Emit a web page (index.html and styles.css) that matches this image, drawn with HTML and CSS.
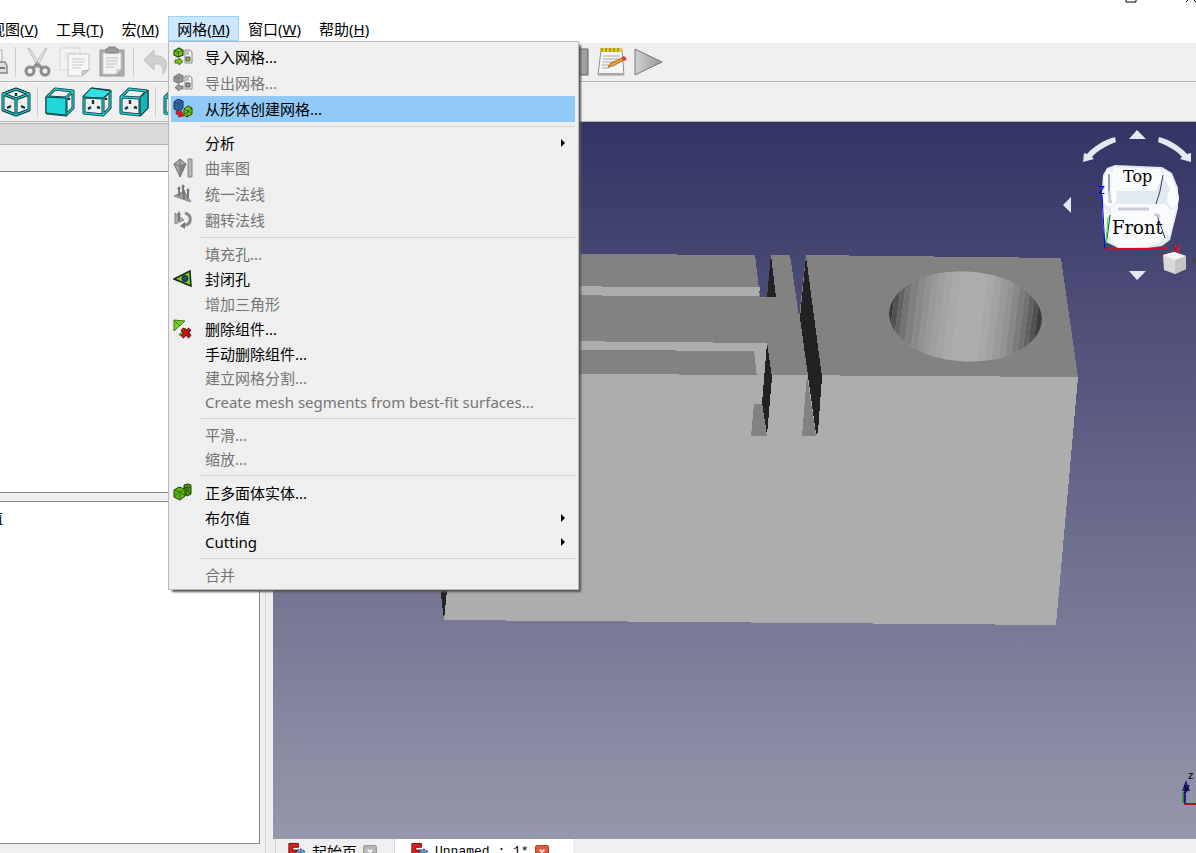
FILE: index.html
```html
<!DOCTYPE html>
<html lang="zh">

<head>
    <meta charset="UTF-8" />
    <meta name="viewport" content="width=device-width, initial-scale=1" />
    <title>FreeCAD</title>
    <link rel="stylesheet" href="styles.css">
</head>

<body>
    <!-- 公用图形 -->
    <svg class="defs" aria-hidden="true">
        <symbol id="openFrame" viewBox="-2 -2 32 32">
            <g fill="none" stroke-linejoin="round">
                <path stroke="#06383a" stroke-width="3" d="M1 9L20 10V27L1 25ZM20 10L27 3V20L20 27M27 3L9 1L1 9" />
                <path stroke="#22cfd2" stroke-width="1.3" d="M1 9L20 10V27L1 25ZM20 10L27 3V20L20 27M27 3L9 1L1 9" />
                <path stroke="#06383a" stroke-width="2.4" d="M10 12V16M5 21L8 19M14 19L17 20M23 10V12" />
            </g>
        </symbol>
        <symbol id="meshDoc" viewBox="0 0 20 20">
            <path d="M1 4L6 1L10 3V8L5 10L1 8Z" fill="var(--ic)" stroke="var(--ic-dark)" stroke-width="1.2" />
            <path d="M1 4L6 5L10 3M6 5L5 10M3 7L6 5" fill="none" stroke="var(--ic-dark)" stroke-width="0.7" />
            <path d="M12 3H17L19 5V16H12Z" fill="#f4f4f4" stroke="#888" />
            <path d="M13 5H16M13 7H16" stroke="#888" />
            <path d="M13 10H17V14H13Z" fill="var(--ic)" stroke="#555" />
        </symbol>
        <symbol id="cad" viewBox="0 0 20 20">
            <path d="M2 1H12V5H6V8H10V12H6V18H2Z" fill="#e02020" stroke="#6b0808" />
            <circle cx="14" cy="12" r="4" fill="#729fcf" stroke="#204a87" stroke-width="3" stroke-dasharray="2 1" />
            <circle cx="14" cy="12" r="4" fill="#729fcf" />
            <circle cx="14" cy="12" r="2" fill="#f4f4f4" stroke="#204a87" />
        </symbol>
        <linearGradient id="metal">
            <stop stop-color="#d0d0d0" />
            <stop offset="1" stop-color="#999" />
        </linearGradient>
    </svg>

    <header class="title-bar">
        <button class="win-btn" aria-label="最大化"><svg width="12" height="12"><path d="M1 1H11V11H1Z" fill="none" stroke="#000" /></svg></button>
        <button class="win-btn" aria-label="关闭"><svg width="12" height="12"><path d="M1 11L6 6L11 11M1 1L6 6L11 1" fill="none" stroke="#000" /></svg></button>
    </header>

    <nav class="menu-bar">
        <button>视图(<u>V</u>)</button>
        <button>工具(<u>T</u>)</button>
        <button>宏(<u>M</u>)</button>
        <div class="menu-holder">
            <button class="open" aria-expanded="true">网格(<u>M</u>)</button>
            <ul class="menu">
                <li><button class="item with-icon"><svg class="ic-green" viewBox="0 0 20 20"><use href="#meshDoc" /><path d="M2 13H6V11L10 14.500L6 18V16H2Z" fill="#73d216" stroke="#3c6e0c" /></svg>导入网格...</button></li>
                <li><button class="item with-icon" disabled><svg class="ic-gray" viewBox="0 0 20 20"><use href="#meshDoc" /><path d="M10 13H6V11L2 14.500L6 18V16H10Z" fill="#999" stroke="#777" /></svg>导出网格...</button></li>
                <li><button class="item with-icon active"><svg viewBox="0 0 20 20">
                    <path d="M1 3L5 0L10 2V9L6 12L1 10Z" fill="#3465a4" stroke="#16305a" /><path d="M1 3L6 5L10 2M6 5V12" fill="none" stroke="#204a87" />
                    <path d="M3 12L7 13L8 11L11 17L5 18L6 16L3 15Z" fill="#e01b1b" stroke="#7a0b0b" stroke-width="0.500" />
                    <path d="M11 10L15 7L19 9V15L14 18L11 16Z" fill="#73c81e" stroke="#20420a" /><path d="M11 10L15 12L19 9M15 12L14 18M12 15L15 12L18 14" fill="none" stroke="#20420a" stroke-width="0.700" /></svg>从形体创建网格...</button></li>
                <li class="sep"></li>
                <li><button class="item sub">分析</button></li>
                <li><button class="item with-icon" disabled><svg viewBox="0 0 20 20"><path d="M1 6L7 1L13 6L7 19Z" fill="#a5a5a5" stroke="#777" /><path d="M1 6L7 8L13 6M7 1V19" fill="none" stroke="#666" stroke-width="0.700" /><path d="M7 8L13 6L7 19Z" fill="#808080" /><path d="M15 1H19V19H15Z" fill="#b5b5b5" stroke="#888" /></svg>曲率图</button></li>
                <li><button class="item with-icon" disabled><svg viewBox="0 0 20 20"><path d="M1 12L11 7L18 18Z" fill="#999" stroke="#888" /><path d="M6 12V4M10 10V2M11 15V6M15 14V6" stroke="#777" stroke-width="2" /><path d="M4 5L6 2L8 5ZM8 3L10 0L12 3ZM13 7L15 4L17 7Z" fill="#777" /></svg>统一法线</button></li>
                <li><button class="item with-icon" disabled><svg viewBox="0 0 20 20"><path d="M2 3V14L11 10Z" fill="#aaa" stroke="#888" /><path d="M6 11V4" stroke="#777" stroke-width="2" /><path d="M4 5L6 1L8 5ZM12 12V19L7 16Z" fill="#777" /><path d="M12 3C19 5 19 14 12 15" fill="none" stroke="#8a8a8a" stroke-width="3" /></svg>翻转法线</button></li>
                <li class="sep"></li>
                <li><button class="item" disabled>填充孔...</button></li>
                <li><button class="item with-icon"><svg viewBox="0 0 20 20"><path d="M1 10L17 2L18 17Z" fill="#73d216" stroke="#1c2a10" stroke-width="1.500" /><circle cx="12" cy="9.500" r="3" fill="#204a87" stroke="#0d1f3c" /></svg>封闭孔</button></li>
                <li><button class="item" disabled>增加三角形</button></li>
                <li><button class="item with-icon"><svg viewBox="0 0 20 20"><path d="M1 1L12 2L1 12ZM6 16L12 9L18 16Z" fill="#73d216" stroke="#47702a" /><path d="M1 1L7 7" stroke="#47702a" /><path d="M9 10L17 18M17 10L9 18" stroke="#630b0b" stroke-width="4" /><path d="M9 10L17 18M17 10L9 18" stroke="#d81616" stroke-width="2" /></svg>删除组件...</button></li>
                <li><button class="item">手动删除组件...</button></li>
                <li><button class="item" disabled>建立网格分割...</button></li>
                <li><button class="item" disabled>Create mesh segments from best-fit surfaces...</button></li>
                <li class="sep"></li>
                <li><button class="item" disabled>平滑...</button></li>
                <li><button class="item" disabled>缩放...</button></li>
                <li class="sep"></li>
                <li><button class="item with-icon"><svg viewBox="0 0 20 20"><path d="M11 2L15 1L18 2V11L14 13L11 11Z" fill="#4e9a06" stroke="#20420a" /><path d="M11 5L14 4L18 5M13 12L14 4L17 11" fill="none" stroke="#20420a" stroke-width="0.700" /><path d="M1 7L6 4L12 6V13L7 17L1 14Z" fill="#5fb30f" stroke="#20420a" /><path d="M1 7L7 9L12 6M7 9V17M2 13L7 9L12 12" fill="none" stroke="#2f5c0a" stroke-width="0.700" /></svg>正多面体实体...</button></li>
                <li><button class="item sub">布尔值</button></li>
                <li><button class="item sub">Cutting</button></li>
                <li class="sep"></li>
                <li><button class="item" disabled>合并</button></li>
            </ul>
        </div>
        <button>窗口(<u>W</u>)</button>
        <button>帮助(<u>H</u>)</button>
    </nav>

    <div class="toolbar file-tools">
        <button aria-label="打印"><svg viewBox="0 0 32 32"><path d="M8 4H24V16H8Z" fill="#f4f4f4" stroke="#aaa" /><path d="M3 16H27L29 20V27H2V20Z" fill="#dcdcdc" stroke="#888" stroke-width="1.500" /><path d="M4 22H27" stroke="#777" stroke-width="2" /></svg></button>
        <span class="divider"></span>
        <button aria-label="剪切"><svg viewBox="0 0 32 32">
            <path d="M6 2L8 3L19 20L16 22ZM25 2L23 3L12 20L15 22Z" fill="#e4e4e4" stroke="#bcbcbc" />
            <ellipse cx="8" cy="25" rx="4" ry="4" fill="none" stroke="#8c8c8c" stroke-width="3" /><ellipse cx="23" cy="25" rx="4" ry="4" fill="none" stroke="#8c8c8c" stroke-width="3" />
            <path d="M11 22L15 18L20 22" fill="none" stroke="#8c8c8c" stroke-width="3" /></svg></button>
        <button aria-label="复制"><svg viewBox="0 0 32 32">
            <path d="M1 2H21V24H1Z" fill="#f2f2f2" stroke="#d6d6d6" /><path d="M5 7H17M5 10H17M5 13H17" stroke="#ddd" />
            <path d="M9 8H30V24L23 30H9Z" fill="#f6f6f6" stroke="#c4c4c4" /><path d="M13 13H26M13 16H26M13 19H24M13 22H22" stroke="#c8c8c8" /><path d="M30 24L23 30V25Z" fill="#ccc" stroke="#bbb" /></svg></button>
        <button aria-label="粘贴"><svg viewBox="0 0 32 32">
            <path d="M4 4H28V30H4Z" fill="#aaa" stroke="#989898" /><path d="M7 7H25V23L20 28H7Z" fill="#f3f3f3" stroke="#ccc" />
            <path d="M10 12H22M10 15H22M10 18H21M10 21H18" stroke="#bbb" /><path d="M25 23L20 28V23Z" fill="#d4d4d4" /><path d="M10 3L13 1H19L22 3V7H10Z" fill="#999" stroke="#888" /></svg></button>
        <span class="divider"></span>
        <button aria-label="撤销"><svg viewBox="0 0 32 32"><path d="M4 14L14 4V10C26 9 30 18 23 28C24 20 21 17 14 18V24Z" fill="#cfcfcf" stroke="#bdbdbd" /></svg></button>
        <div class="macro-tools">
            <button aria-label="停止"><svg viewBox="0 0 32 32"><path d="M3 3H29V29H3Z" fill="url(#metal)" stroke="#666" /></svg></button>
            <button aria-label="编辑宏"><svg viewBox="0 0 32 32">
                <path d="M5 4H26L28 29H2Z" fill="#f5f5f5" stroke="#909090" /><path d="M2 27H28V29H2Z" fill="#aaa" /><path d="M7 10H24M7 13H24M6 16H23M6 19H16M6 22H14" stroke="#aaa" />
                <path d="M4 2H26V6H4Z" fill="#dfc832" /><path d="M6 2V6M10 2V6M14 2V6M18 2V6M22 2V6" stroke="#7d741a" />
                <path d="M12 21L15 17L26 12L28 14L17 20Z" fill="#e4a03a" stroke="#8b5200" stroke-width="0.700" /><path d="M25 12L28 10L31 13L28 15Z" fill="#e53737" /></svg></button>
            <button aria-label="执行宏"><svg viewBox="0 0 32 32"><path d="M2 3L29 16L2 29Z" fill="url(#metal)" stroke="#777" /></svg></button>
        </div>
    </div>

    <div class="toolbar view-tools">
        <button aria-label="轴测图"><svg viewBox="-2 -2 32 32"><g fill="none" stroke-linejoin="round"><path stroke="#06383a" stroke-width="3" d="M14 1L27 6V22L14 27L1 22V6ZM1 6L14 11L27 6M14 11V27" /><path stroke="#22cfd2" stroke-width="1.300" d="M14 1L27 6V22L14 27L1 22V6ZM1 6L14 11L27 6M14 11V27" /><path stroke="#06383a" stroke-width="2.400" d="M14 5V8M5 20L9 18M19 18L23 20" /></g></svg></button>
        <span class="divider"></span>
        <button aria-label="前视图"><svg viewBox="-2 -2 32 32"><use href="#openFrame" x="-2" y="-2" width="32" height="32" /><path d="M0 9L20 10V27L0 25Z" fill="#20d8db" stroke="#06383a" /></svg></button>
        <button aria-label="俯视图"><svg viewBox="-2 -2 32 32"><use href="#openFrame" x="-2" y="-2" width="32" height="32" /><path d="M0 9L8 0L28 3L20 10Z" fill="#30e0e2" stroke="#06383a" /></svg></button>
        <button aria-label="右视图"><svg viewBox="-2 -2 32 32"><use href="#openFrame" x="-2" y="-2" width="32" height="32" /><path d="M20 10L28 2V20L20 28Z" fill="#16b4b8" stroke="#06383a" /></svg></button>
        <span class="divider"></span>
        <button aria-label="后视图"><svg viewBox="-2 -2 32 32"><use href="#openFrame" x="-2" y="-2" width="32" height="32" /></svg></button>
    </div>

    <main class="workspace">
        <aside class="sidebar">
            <div class="dock-title"></div>
            <div class="dock-tabs"></div>
            <div class="panel tree"></div>
            <div class="panel props"><span>值</span></div>
        </aside>

        <section class="document">
            <svg class="scene" viewBox="273 122 923 717" preserveAspectRatio="xMaxYMid slice" role="img" aria-label="三维视图">
                <defs>
                    <clipPath id="hole"><ellipse cx="965.5" cy="316.5" rx="76.5" ry="45" transform="rotate(3 965 316)" /></clipPath>
                </defs>
                <g shape-rendering="crispEdges">
                    <!-- 顶面 -->
                    <path fill="#828282" d="M440 253L755 255L760 297H767L771 255H790L799 317L806 255L1061 258L1078 377L440 373Z" />
                    <!-- 前面 -->
                    <path fill="#adadad" d="M440 373L1078 377L1056 625L444 620Z" />
                    <path fill="#222" d="M438 570L447 590L444 620Z" />
                    <path fill="#adadad" d="M440 286L760 287L759 296L440 295ZM440 340L767 343L772 377H757L754 351L440 349Z" />
                    <path fill="#222" d="M771 255L776 297H767ZM806 256L822 377L818 432L816 434L800 318ZM767 343L772 377L767 435L762 403Z" />
                    <path fill="#828282" d="M807 375L816 436H802ZM754 404H762L767 436H751Z" />
                </g>
                <!-- 圆孔内壁 -->
                <g clip-path="url(#hole)">
                    <g transform="translate(967 316) skewX(-7)">
                        <rect x="-90" y="-60" width="180" height="120" fill="#adadad" />
                        <path fill="#3a3a3a" d="M-90-60h15v120h-15z" />
                        <path fill="#515151" d="M-75-60h5v120h-5z" />
                        <path fill="#646464" d="M-70-60h5v120h-5z" />
                        <path fill="#737373" d="M-65-60h6v120h-6z" />
                        <path fill="#7f7f7f" d="M-59-60h7v120h-7z" />
                        <path fill="#898989" d="M-52-60h7v120h-7z" />
                        <path fill="#929292" d="M-45-60h6v120h-6z" />
                        <path fill="#999" d="M-39-60h6v120h-6z" />
                        <path fill="#9f9f9f" d="M-33-60h7v120h-7z" />
                        <path fill="#a4a4a4" d="M-26-60h7v120h-7z" />
                        <path fill="#a9a9a9" d="M-19-60h8v120h-8z" />
                        <path fill="#a8a8a8" d="M16-60h7v120h-7z" />
                        <path fill="#a2a2a2" d="M23-60h7v120h-7z" />
                        <path fill="#9a9a9a" d="M30-60h7v120h-7z" />
                        <path fill="#929292" d="M37-60h6v120h-6z" />
                        <path fill="#888" d="M43-60h6v120h-6z" />
                        <path fill="#7c7c7c" d="M49-60h6v120h-6z" />
                        <path fill="#707070" d="M55-60h5v120h-5z" />
                        <path fill="#626262" d="M60-60h5v120h-5z" />
                        <path fill="#525252" d="M65-60h5v120h-5z" />
                        <path fill="#3d3d3d" d="M70-60h20v120h-20z" />
                    </g>
                </g>

                <!-- 导航立方体 -->
                <g fill="#e2e9f0">
                    <path d="M1137 130L1146 139H1129ZM1137 280L1146 271H1129ZM1063 205L1071 197V213Z" />
                    <path d="M1115 137L1116 142C1106 146 1098 150 1092 157L1094 159L1083 162L1084 153L1087 154C1094 146 1104 140 1115 137Z" />
                    <path d="M1159 137L1158 142C1168 146 1176 150 1182 157L1180 159L1191 162V153L1187 154C1180 146 1170 140 1159 137Z" />
                    <path d="M1107 168L1115 165L1162 167L1172 173L1178 188V208L1170 240L1162 246L1148 248H1118L1106 242L1103 228L1102 190L1103 175Z" />
                </g>
                <g fill="#f9fbfd">
                    <path d="M1114 167L1161 169L1163 175L1156 191H1111L1112 174Z" />
                    <path d="M1111 208L1117 204H1165L1170 208L1167 228L1161 242L1148 247H1120L1111 242Z" />
                    <path d="M1109 168L1112 174L1110 190L1105 192L1103 178ZM1163 168L1171 175L1176 189L1171 191L1164 178Z" />
                    <ellipse cx="1110" cy="197" rx="7" ry="10" /><ellipse cx="1173" cy="198" rx="6" ry="10" />
                    <path d="M1102 208L1109 212L1111 237L1105 239ZM1170 210L1176 208L1170 236L1164 234Z" />
                </g>
                <path d="M1109 174V191L1111 203M1163 175L1160 191L1156 204M1110 215L1107 239M1157 215L1165 238" fill="none" stroke="#373a68" />
                <path d="M1118 209H1149M1109 191L1110 203M1155 214L1160 217" fill="none" stroke="#c9cad9" stroke-width="3" />
                <text class="cube-top" x="1123" y="182">Top</text>
                <text class="cube-front" x="1112" y="234">Front</text>
                <path d="M1102 195L1105 249" stroke="#00f" />
                <path d="M1108 217L1106 244" stroke="#0f0" />
                <path d="M1105 249L1168 248" stroke="#f00" />
                <text class="axis" x="1098" y="194" fill="#00f">z</text>
                <text class="axis" x="1173" y="253" fill="#f00">x</text>
                <path d="M1163 255L1174 252L1186 256V269L1175 274L1164 270Z" fill="#d9d9d9" />
                <path d="M1163 255L1174 252L1186 256L1175 260Z" fill="#f4f4f4" />
                <path d="M1175 260L1186 256V269L1175 274Z" fill="#c4c4c4" />
                <path d="M1190 259H1196V265Z" fill="#444" />

                <!-- 坐标轴 -->
                <path d="M1184 792V803" stroke="#1d8c1d" stroke-width="3" />
                <path d="M1185 803V787" stroke="#20208c" stroke-width="2" />
                <path d="M1186 780L1190 791H1182Z" fill="#20208c" />
                <path d="M1184 804H1196" stroke="#8c2020" stroke-width="2" />
                <text class="axis-small" x="1188" y="779">z</text>
                <text class="axis-small" x="1184" y="791">y</text>
            </svg>
            <nav class="tabs">
                <div class="tab"><svg class="logo"><use href="#cad" /></svg><a href="#start">起始页</a><button aria-label="关闭起始页"><svg viewBox="0 0 10 10"><path d="M2 2L8 8M8 2L2 8" stroke="#fff" stroke-width="2" /></svg></button></div>
                <div class="tab current"><svg class="logo"><use href="#cad" /></svg><a href="#doc">Unnamed : 1*</a><button aria-label="关闭文档"><svg viewBox="0 0 10 10"><path d="M2 2L8 8M8 2L2 8" stroke="#fff" stroke-width="2" /></svg></button></div>
            </nav>
        </section>
    </main>
</body>

</html>
```

FILE: styles.css
```css
* {
    box-sizing: border-box;
}

body {
    margin: 0;
    height: 100vh;
    overflow: hidden;
    display: flex;
    flex-direction: column;
    background: #efefef;
    color: #000;
    font: 15px/24px "Noto Sans", "Noto Sans CJK SC", sans-serif;
}

button {
    margin: 0;
    padding: 0;
    border: none;
    background: none;
    color: inherit;
    font: inherit;
}

svg {
    display: block;
}

.defs {
    position: absolute;
    width: 0;
    height: 0;
}

/* 标题栏和菜单栏 */
.title-bar {
    height: 16px;
    flex: none;
    display: flex;
    justify-content: flex-end;
    align-items: flex-start;
    gap: 48px;
    background: #fff;
}

.win-btn {
    margin-top: -9px;
}

.win-btn:last-child {
    margin-right: -1px;
}

.menu-bar {
    height: 26px;
    flex: none;
    display: flex;
    margin-left: -19px;
    background: #fff;
}

.menu-bar > button,
.menu-bar .open {
    height: 25px;
    padding: 0 8px;
    border: 1px solid transparent;
    white-space: nowrap;
}

.menu-bar .open {
    padding: 0 7px;
    width: 71px;
    background: #cce8ff;
    border-color: #99d1ff;
}

.menu-holder {
    position: relative;
}

.menu {
    position: absolute;
    z-index: 10;
    top: 25px;
    left: 0;
    margin: 0;
    padding: 2px 3px 2px 2px;
    width: 411px;
    list-style: none;
    background: #efefef;
    border: 1px solid #b8b8b8;
    box-shadow: 3px 3px 2px -1px #555;
}

.item {
    display: flex;
    align-items: center;
    width: 100%;
    height: 24px;
    padding-left: 34px;
    text-align: left;
    white-space: nowrap;
}

.item:disabled {
    color: #757575;
}

.with-icon {
    height: 26px;
    padding-left: 2px;
    gap: 12px;
}

.item svg {
    width: 20px;
    height: 20px;
}

.ic-green {
    --ic: #73c81e;
    --ic-dark: #2b5009;
}

.ic-gray {
    --ic: #999;
    --ic-dark: #777;
}

.item.active {
    background: #91c9f7;
}

.sub::after {
    content: "";
    margin-left: auto;
    margin-right: 10px;
    border: 4px solid transparent;
    border-left-color: #000;
    border-right: none;
}

.sep {
    height: 1px;
    margin: 4px 0 4px 30px;
    background: #d2d2d2;
}

/* 工具栏 */
.toolbar {
    height: 40px;
    flex: none;
    display: flex;
    align-items: center;
    border-bottom: 1px solid #b4b4b4;
    border-top: 1px solid #fafafa;
}

.toolbar button {
    flex: none;
    width: 37px;
    height: 36px;
    display: grid;
    place-items: center;
}

.toolbar svg {
    width: 32px;
    height: 32px;
}

.file-tools {
    margin-left: -25px;
}

.view-tools {
    margin-left: -3px;
}

.divider {
    flex: none;
    width: 1px;
    height: 30px;
    margin: 0 3px;
    background: #ccc;
}

.macro-tools {
    display: flex;
    margin-left: 382px;
}

/* 左侧面板 */
.workspace {
    flex: 1;
    min-height: 0;
    display: flex;
}

.sidebar {
    flex: none;
    width: 266px;
    padding: 1px 5px 9px 0;
    display: flex;
    flex-direction: column;
    border-right: 1px solid #d4d4d4;
}

.dock-title {
    height: 22px;
    background: #d9d9d9;
    border: 1px solid #b4b4b4;
    border-left: none;
}

.dock-tabs {
    height: 26px;
}

.panel {
    min-height: 0;
    overflow: hidden;
    background: #fff;
    border: 1px solid #828790;
    border-left: none;
}

.tree {
    flex: 326;
    margin-bottom: 8px;
}

.props {
    flex: 343;
    padding-top: 4px;
}

.props span {
    margin-left: -12px;
}

/* 三维视图 */
.document {
    flex: 1;
    min-width: 0;
    margin-left: 7px;
    display: flex;
    flex-direction: column;
}

.scene {
    flex: 1;
    min-height: 0;
    width: 100%;
    background: linear-gradient(#333365, #9797ab);
}

.cube-top,
.cube-front {
    font-family: "DejaVu Serif", serif;
    fill: #000;
}

.cube-top {
    font-size: 16px;
}

.cube-front {
    font-size: 18px;
}

.axis {
    font: 14px "Liberation Sans", sans-serif;
}

.axis-small {
    font: 11px "Liberation Sans", sans-serif;
}

.tabs {
    height: 14px;
    flex: none;
    display: flex;
    align-items: flex-start;
    overflow: hidden;
    padding-left: 2px;
    background: #efefef;
}

.tab {
    flex: none;
    height: 25px;
    padding: 0 17px 0 11px;
    display: flex;
    align-items: center;
    gap: 6px;
    border-left: 1px solid #d4d4d4;
    font-size: 15px;
}

.tab a {
    color: #000;
    text-decoration: none;
}

.tab .logo {
    width: 19px;
    height: 20px;
}

.tab button {
    width: 14px;
    height: 14px;
    padding: 2px;
    border-radius: 2px;
    background: #b5b5b5;
    border: 1px solid #999;
}

.current {
    padding: 0 24px 0 15px;
    background: #fff;
    font: 13px "Liberation Mono", monospace;
}

.current button {
    background: #e0593c;
    border-color: #c43f24;
}
```
